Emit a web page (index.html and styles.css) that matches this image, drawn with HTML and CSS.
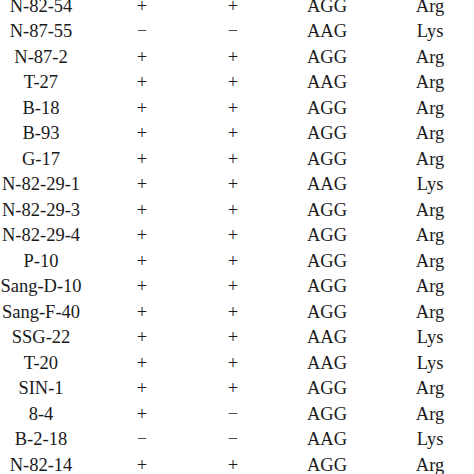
FILE: index.html
```html
<!DOCTYPE html>
<html>
<head>
<meta charset="utf-8">
<link rel="stylesheet" href="styles.css">
</head>
<body>
<table class="data">
<colgroup>
<col class="c1"><col class="c2"><col class="c3"><col class="c4"><col class="c5">
</colgroup>
<tbody>
<tr><td>N-82-54</td><td>+</td><td>+</td><td>AGG</td><td>Arg</td></tr>
<tr><td>N-87-55</td><td>−</td><td>−</td><td>AAG</td><td>Lys</td></tr>
<tr><td>N-87-2</td><td>+</td><td>+</td><td>AGG</td><td>Arg</td></tr>
<tr><td>T-27</td><td>+</td><td>+</td><td>AAG</td><td>Arg</td></tr>
<tr><td>B-18</td><td>+</td><td>+</td><td>AGG</td><td>Arg</td></tr>
<tr><td>B-93</td><td>+</td><td>+</td><td>AGG</td><td>Arg</td></tr>
<tr><td>G-17</td><td>+</td><td>+</td><td>AGG</td><td>Arg</td></tr>
<tr><td>N-82-29-1</td><td>+</td><td>+</td><td>AAG</td><td>Lys</td></tr>
<tr><td>N-82-29-3</td><td>+</td><td>+</td><td>AGG</td><td>Arg</td></tr>
<tr><td>N-82-29-4</td><td>+</td><td>+</td><td>AGG</td><td>Arg</td></tr>
<tr><td>P-10</td><td>+</td><td>+</td><td>AGG</td><td>Arg</td></tr>
<tr><td>Sang-D-10</td><td>+</td><td>+</td><td>AGG</td><td>Arg</td></tr>
<tr><td>Sang-F-40</td><td>+</td><td>+</td><td>AGG</td><td>Arg</td></tr>
<tr><td>SSG-22</td><td>+</td><td>+</td><td>AAG</td><td>Lys</td></tr>
<tr><td>T-20</td><td>+</td><td>+</td><td>AAG</td><td>Lys</td></tr>
<tr><td>SIN-1</td><td>+</td><td>+</td><td>AGG</td><td>Arg</td></tr>
<tr><td>8-4</td><td>+</td><td>−</td><td>AGG</td><td>Arg</td></tr>
<tr><td>B-2-18</td><td>−</td><td>−</td><td>AAG</td><td>Lys</td></tr>
<tr><td>N-82-14</td><td>+</td><td>+</td><td>AGG</td><td>Arg</td></tr>
</tbody>
</table>
</body>
</html>
```
FILE: styles.css
```css
html, body {
  margin: 0;
  padding: 0;
  background: #ffffff;
  overflow: hidden;
}
.data {
  border-collapse: collapse;
  table-layout: fixed;
  width: 470px;
  margin-top: -6.5px;
  font-family: "Liberation Serif", "Times New Roman", serif;
  font-size: 18.5px;
  color: #1a1a1a;
}
.data td {
  padding: 0;
  height: 25.5px;
  line-height: 25.5px;
  text-align: center;
  white-space: nowrap;
}
.c1 { width: 82px; }
.c2 { width: 120px; }
.c3 { width: 62px; }
.c4 { width: 126px; }
.c5 { width: 80px; }
```
